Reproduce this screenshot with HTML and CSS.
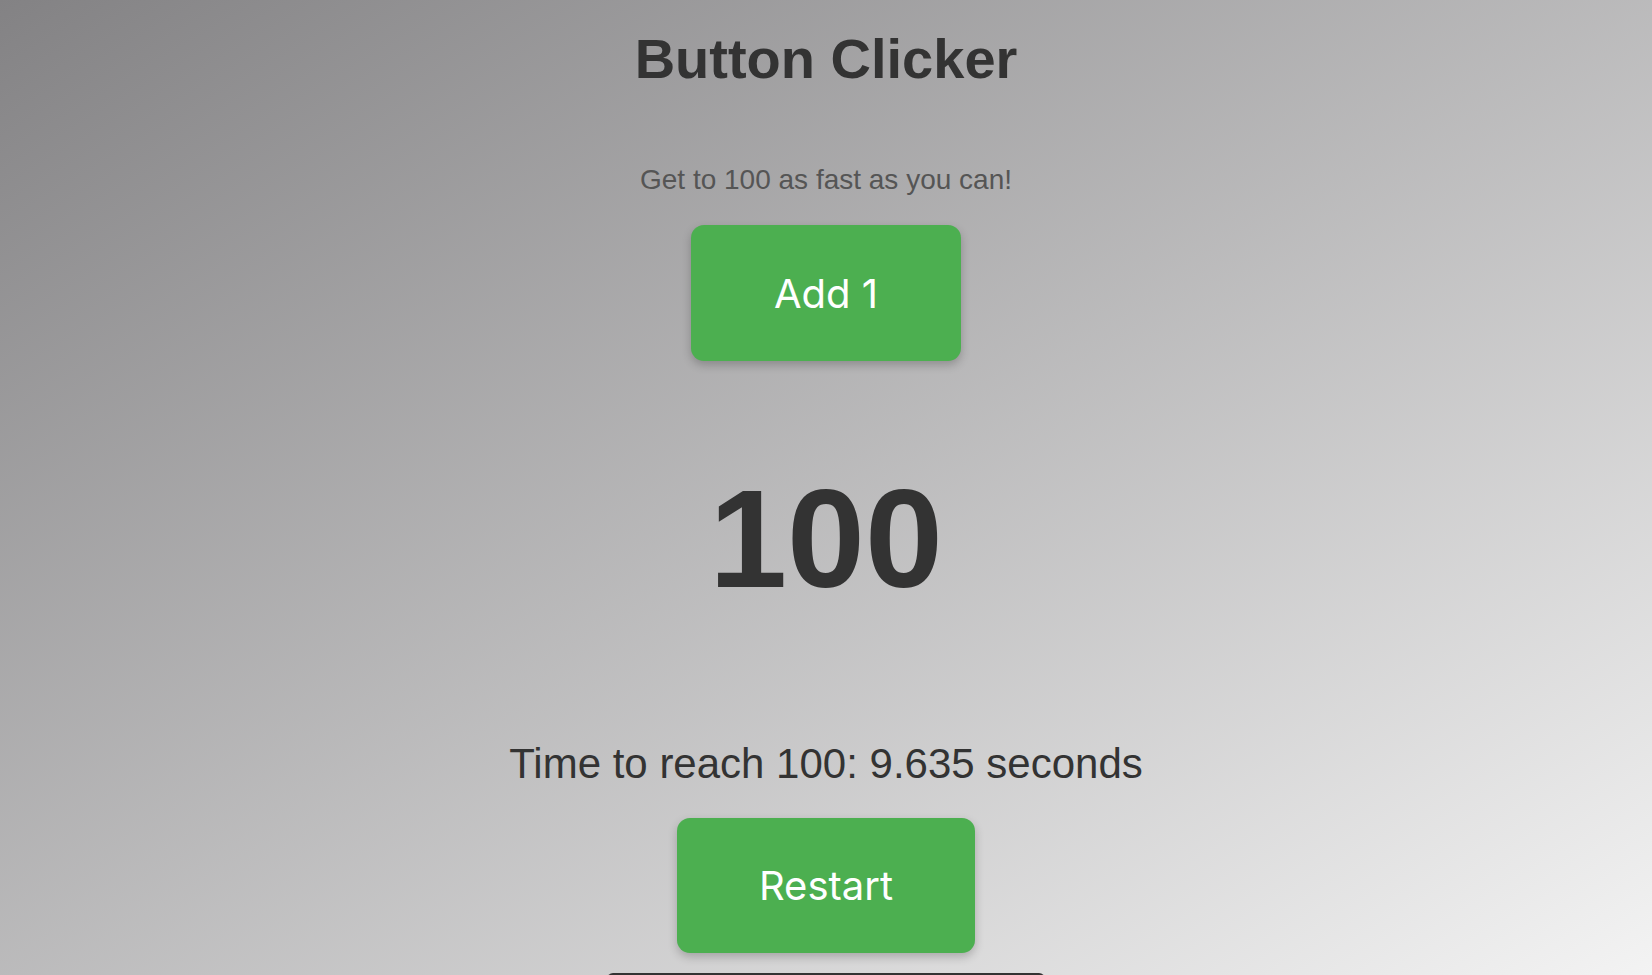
FILE: index.html
```html
<!DOCTYPE html>
<html lang="en">
<head>
<meta charset="utf-8">
<title>Button Clicker</title>
<link rel="stylesheet" href="styles.css">
</head>
<body>
<main class="game">
  <h1 class="title">Button Clicker</h1>
  <p class="subtitle">Get to 100 as fast as you can!</p>
  <button class="btn btn-add" type="button">Add 1</button>
  <div class="counter">100</div>
  <p class="result">Time to reach 100: 9.635 seconds</p>
  <button class="btn btn-restart" type="button">Restart</button>
  <section class="scores"></section>
</main>
</body>
</html>
```

FILE: styles.css
```css
html, body {
  margin: 0;
  padding: 0;
  height: 100%;
  overflow: hidden;
}

body {
  background: linear-gradient(to bottom right, #838284 0%, #f3f3f3 100%);
  font-family: "Liberation Sans", Arial, sans-serif;
  color: #333;
}

.game {
  display: flex;
  flex-direction: column;
  align-items: center;
  padding-top: 31px;
}

.title {
  margin: 0;
  font-size: 56px;
  line-height: 1;
  font-weight: bold;
  color: #333;
}

.subtitle {
  margin: 79px 0 0;
  font-size: 28px;
  line-height: 1;
  color: #555;
}

.btn {
  display: flex;
  align-items: center;
  justify-content: center;
  height: 136px;
  padding: 0;
  border: none;
  border-radius: 13px;
  background: #4caf50;
  color: #fff;
  font-family: Inter, "Noto Sans", sans-serif;
  font-size: 40px;
  font-weight: 400;
  box-shadow: 0 4px 10px rgba(0, 0, 0, 0.22);
  cursor: pointer;
}

.btn-add {
  margin-top: 31px;
  width: 270px;
}

.counter {
  margin-top: 108px;
  font-size: 140px;
  line-height: 1;
  font-weight: bold;
  color: #333;
}

.result {
  margin: 134px 0 0;
  font-size: 42px;
  line-height: 1;
  color: #333;
}

.btn-restart {
  margin-top: 33px;
  width: 298px;
  height: 135px;
}

.scores {
  margin-top: 20px;
  width: 438px;
  height: 40px;
  background: #333;
  border-radius: 6px 6px 0 0;
}
```
